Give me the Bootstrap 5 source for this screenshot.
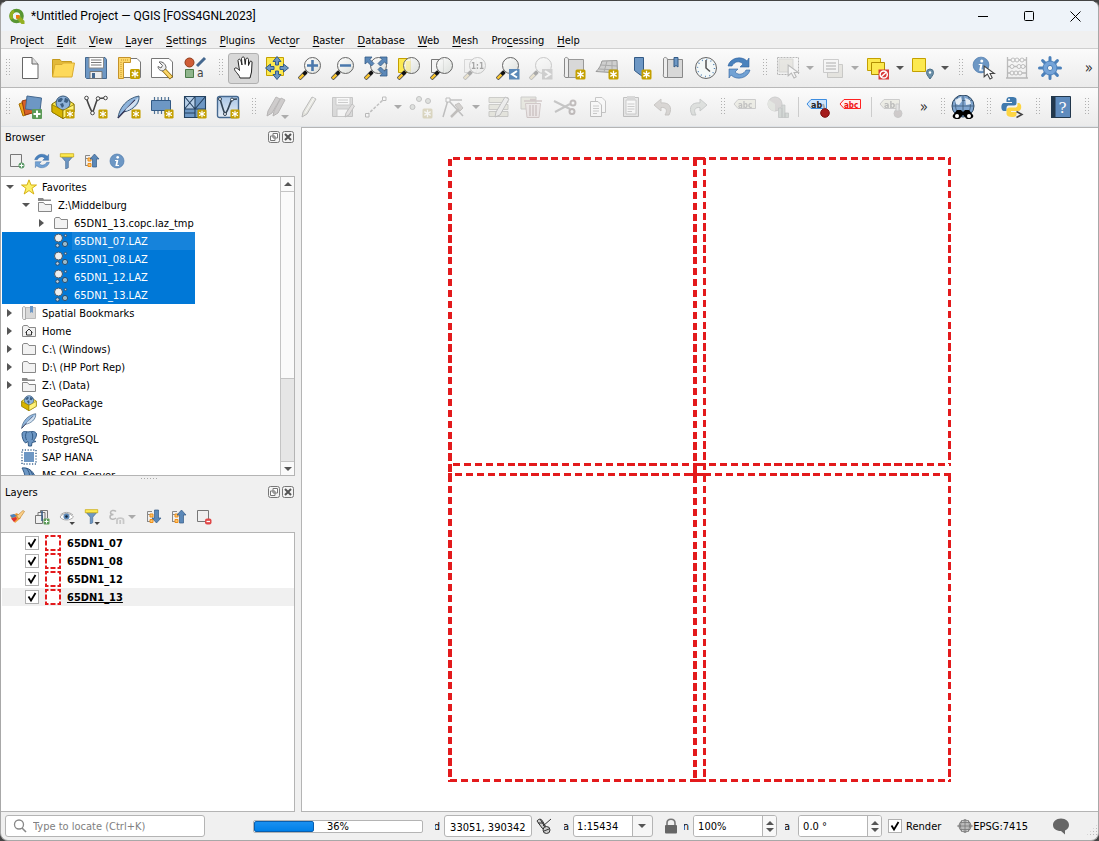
<!DOCTYPE html>
<html lang="en">
<head>
<meta charset="utf-8">
<meta name="viewport" content="width=device-width, initial-scale=1">
<title>*Untitled Project — QGIS [FOSS4GNL2023]</title>
<link href="https://cdn.jsdelivr.net/npm/bootstrap@5.3.0/dist/css/bootstrap.min.css" rel="stylesheet">
<style>
  :root { --edge:#b4b4b4; --face:#f0f0f0; }
  body { background:#444; font-family:"DejaVu Sans Condensed","Noto Sans",sans-serif; font-size:11px; line-height:18px; color:#000; }
  .app { background:var(--face); border:1px solid #a8a8a8; border-top-color:#444; border-radius:8px; overflow:hidden; }
  button { color:inherit; font:inherit; border:0; background:none; padding:0; }
  .titlebar { height:30px; background:#eef3f9; font-family:Roboto,"Noto Sans",sans-serif; font-size:12px; padding-left:8px; }
  .titlebar span { padding-left:2px; }
  .winbtn { width:46px; height:30px; }
  .menu { height:17px; padding-left:9px; gap:13px; line-height:19px; }
  .menu a { color:#000; text-decoration:none; }
  .menu u { text-underline-offset:2px; }
  .bar { height:39px; background:linear-gradient(#fbfbfb,#ebebeb); border-top:1px solid #cfcfcf; }
  .bar + .bar { border-top-color:#b8b8b8; }
  .tool { width:33px; height:31px; display:flex; align-items:center; justify-content:center; flex:none; border-radius:3px; }
  .tool svg { width:24px; height:24px; }
  .tool:disabled svg, .tool-sm:disabled svg { opacity:.32; filter:grayscale(.6); }
  .tool.active { width:31px; margin:0 1px; background:#d8d8d8; border:1px solid #b0b0b0; }
  .grip { width:16px; height:18px; flex:none; background:linear-gradient(90deg,#b0b0b0 1px,transparent 1px,transparent 3px,#b0b0b0 3px) 8px 0/4px 3px repeat-y; -webkit-mask:repeating-linear-gradient(#000 0 1px,transparent 1px 3px); mask:repeating-linear-gradient(#000 0 1px,transparent 1px 3px); }
  .grip.first { width:12px; background-position:5px 0; }
  .grip.mid { width:15px; }
  .grip.tight { width:13px; }
  .drop { width:12px; height:24px; flex:none; display:flex; align-items:center; justify-content:center; }
  .drop::before { content:""; border:4px solid transparent; border-top-color:#555; border-bottom:0; }
  .drop:disabled::before { border-top-color:#aaa; }
  .sep { width:7px; height:20px; flex:none; background:linear-gradient(#ccc,#ccc) 4px 0/1px 100% no-repeat; }
  .more { width:18px; font-size:15px; flex:none; color:#333; }
  .more.wide { width:26px; padding-left:8px; }
  .side { width:294px; flex:none; }
  .browser-pane { height:349px; flex:none; }
  .pane-title { height:19px; padding-left:4px; }
  .pane-title span, .lab, .layers-tree label { padding-top:2px; }
  .pane-title button { width:14px; height:14px; display:flex; align-items:center; justify-content:center; }
  .pane-title svg { width:12px; height:12px; }
  .pane-tools { height:31px; padding-left:7px; gap:7px; }
  .tool-sm { width:18px; height:18px; display:flex; align-items:center; justify-content:center; flex:none; }
  .tool-sm svg, .tree svg { width:16px; height:16px; flex:none; }
  .box { background:#fff; border:1px solid var(--edge); }
  .box-left { border-left:0; }
  .tree { list-style:none; margin:0; padding:1px 0 0 1px; }
  .tree li { height:18px; display:flex; align-items:center; white-space:nowrap; padding-left:3px; }
  .tree .tw { width:16px; height:10px; display:flex; align-items:center; padding-left:1px; flex:none; }
  .tw.open::before { content:""; border:4px solid transparent; border-top-color:#555; border-bottom:0; }
  .tw.shut::before { content:""; border:4px solid transparent; border-left:5px solid #555; border-right:0; margin-left:1px; }
  .tree .lab { padding-left:5px; }
  .tree .l2 { padding-left:19px; } .tree .l3 { padding-left:35px; }
  .tree .sel { background:#0078d7; color:#fff; width:193px; }
  .tree .cur { background:linear-gradient(90deg,#0078d7 70px,#1683db 70px); }
  .vscroll { width:14px; background:#e6e6e6; border-left:1px solid #c4c4c4; }
  .vscroll button { height:14px; background:#fafafa; display:flex; align-items:center; justify-content:center; }
  .vscroll .up::before { content:""; border:4px solid transparent; border-bottom-color:#555; border-top:0; }
  .vscroll .dn { border-top:1px solid #c4c4c4; }
  .thumb { height:188px; background:#fafafa; border:solid #c4c4c4; border-width:1px 0; }
  .hsplit { height:6px; flex:none; background:repeating-linear-gradient(90deg,#aaa 0 1px,transparent 1px 3px) 140px 2px/17px 1px no-repeat; }
  .layers-tree li { padding-left:23px; font-weight:700; }
  .layers-tree label { padding-left:6px; }
  .layers-tree .tick { margin-right:6px; }
  .layers-tree .now { background:#f0f0f0; }
  .tick { appearance:none; width:14px; height:14px; margin:0; border:1px solid #b0b0b0; background:#fff; flex:none; }
  .tick:checked { background:#fff url("data:image/svg+xml,%3Csvg xmlns='http://www.w3.org/2000/svg' viewBox='0 0 12 12'%3E%3Cpath d='M2.5 5.5 5 9.5 9.5 2' fill='none' stroke='%23000' stroke-width='1.8'/%3E%3C/svg%3E") center/12px no-repeat; }
  .vsplit { width:6px; flex:none; }
  .status { height:28px; flex:none; }
  .status label, .status .txt { padding-top:2px; }
  .field { height:22px; border:1px solid var(--edge); border-radius:3px; background:#fff; color:#000; padding:2px 5px 0; font:inherit; min-width:0; }
  .coords { width:88px; }
  .locate { width:200px; padding:0 4px 0 6px; gap:4px; }
  .locate input { border:0; outline:0; min-width:0; font:inherit; flex:1; padding:2px 0 0 1px; }
  .locate input::placeholder { color:#808080; opacity:1; }
  .job { width:170px; height:13px; border:1px solid var(--edge); border-radius:2px; background:#fff; }
  .job .progress-bar { background:linear-gradient(#1a90f0,#0080e8); border:1px solid #0a5fae; border-radius:2px; }
  .job .pct { font-size:11px; padding-top:2px; }
  .clip { width:5px; overflow:hidden; display:flex; justify-content:flex-end; flex:none; }
  .clip.far { margin-left:12px; }
  .lock { margin-left:10px; margin-right:5px; }
  .combo { width:80px; appearance:none; padding:2px 3px 0; background:
     url("data:image/svg+xml,%3Csvg xmlns='http://www.w3.org/2000/svg' width='20' height='20'%3E%3Cpath d='M0 0h1v20H0z' fill='%23b4b4b4'/%3E%3Cpath d='M1 0h19v20H1z' fill='%23f6f6f6'/%3E%3Cpath d='M6 8h8l-4 4z' fill='%23555'/%3E%3C/svg%3E") right 0/20px 20px no-repeat #fff; }
  .spin { width:84px; padding:0; overflow:hidden; }
  .spin input { border:0; outline:0; min-width:0; flex:1; font:inherit; padding:2px 4px 0; }
  .spin div { width:14px; border-left:1px solid var(--edge); background:#f8f8f8; gap:3px; }
  .spin .up::before, .spin .dn::before, .vscroll .dn::before { content:""; display:block; border:4px solid transparent; }
  .spin .up::before { border-bottom-color:#555; border-top:0; }
  .spin .dn::before, .vscroll .dn::before { border-top-color:#555; border-bottom:0; }
  .render { margin-left:6px; }
  .corner { width:12px; height:12px; background:radial-gradient(circle,#bbb 1px,transparent 1px) 0 0/3px 3px; clip-path:polygon(100% 0,100% 100%,0 100%); }
  .ic16 { width:16px; height:16px; flex:none; }
  .main { min-height:0; }
</style>
</head>
<body>
<svg width="0" height="0" class="position-absolute" aria-hidden="true">
  <defs>
    <linearGradient id="gLens" x2="1" y2="1"><stop offset="0" stop-color="#fff"/><stop offset="1" stop-color="#d8dcd8"/></linearGradient>
    <linearGradient id="gBlue" x2="0" y2="1"><stop offset="0" stop-color="#a9c6e6"/><stop offset="1" stop-color="#e8eff7"/></linearGradient>
    <symbol id="badge" viewBox="0 0 11 11"><rect x=".5" y=".5" width="10" height="10" rx="1.5" fill="#c4a000"/><path d="M5.500 1.800V9.200M2.300 3.600 8.700 7.400M8.700 3.600 2.300 7.400" stroke="#fff" stroke-width="1.300"/></symbol>
    <symbol id="lens" viewBox="0 0 24 24"><path d="M1 23 8 16" stroke="#555" stroke-width="4"/><path d="M1.500 22.500 5.500 18.500" stroke="#fcc62c" stroke-width="2.400"/><path d="M5.500 18.500 8.500 15.500" stroke="#111" stroke-width="3.200"/><circle cx="14.500" cy="9.500" r="8" fill="url(#gLens)" fill-opacity=".85" stroke="#666"/></symbol>
    <symbol id="folder16" viewBox="0 0 16 16"><path d="M1.500 13.500V3.500L3 2.500H6.500L8 4.500H14.500V13.500Z" fill="#f2f2f2" stroke="#888"/></symbol>
    <symbol id="folders16" viewBox="0 0 16 16"><path d="M1 4V1H6L7 2.500H14V4Z" fill="#888"/><path d="M1.500 14.500V5.500H6.500L8 7.500H14.500V14.500Z" fill="#f2f2f2" stroke="#888"/></symbol>
    <symbol id="cloud16" viewBox="0 0 16 16"><g stroke="#2c4f70"><circle cx="5.500" cy="5" r="4" fill="#eee" stroke="#456"/><circle cx="12" cy="11" r="2.600" fill="#9bc"/><circle cx="4.500" cy="12.500" r="1.800" fill="#bcd"/><circle cx="12.500" cy="2.500" r="1.200" fill="#bcd"/></g></symbol>
    <symbol id="feather" viewBox="0 0 24 24"><path d="M1 23C2 13 10 3 22 1 23 10 14 16 6 17Z" fill="#8fb5dc" stroke="#415e7b"/><path d="M1 23 18 5" stroke="#335" stroke-width="1.200"/><path d="M8 16C14 15 20 10 21.500 2.500L9 14Z" fill="#d3e1f0"/></symbol>
    <symbol id="gpkg" viewBox="0 0 24 24"><path d="M1 9 12 2 23 9V17L12 23.500 1 17Z" fill="#fce94f" stroke="#8a7500"/><circle cx="12" cy="8" r="7" fill="#8fb3da" stroke="#345577"/><path d="M6.500 5 10 2.500 12 4 10 7 7 7ZM14 2.500 18 5 16 8 13 7ZM9 9 12 8 13 11 11 13Z" fill="#3b5f84"/><path d="M1 9.500 12 15.500V23.500L1 17Z" fill="#d8b400" stroke="#8a7500" stroke-width=".8"/><path d="M12 15.500 23 9.500V17L12 23.500Z" fill="#fff37a" stroke="#8a7500" stroke-width=".8"/></symbol>
    <symbol id="refresh" viewBox="0 0 24 24"><g fill="#4a82bd" stroke="#2f62a0" stroke-width=".6"><path d="M1 10C3 2 14-1 20 5L22 2V11H13L16 8C12 4 7 6 5 10Z"/><path d="M23 14C21 22 10 25 4 19L2 22V13H11L8 16C12 20 17 18 19 14Z" fill="#72a2d4"/></g></symbol>
    <symbol id="filter" viewBox="0 0 24 24"><path d="M3 5H21L14 13V22L10 24V13Z" fill="#6d97c4" stroke="#45688f"/><path d="M2 1H22V6H2Z" fill="#fce94f" stroke="#c4a000"/></symbol>
    <symbol id="info" viewBox="0 0 24 24"><circle cx="12" cy="12" r="10.500" fill="#6d97c4" stroke="#4a78ac"/><circle cx="13" cy="6.500" r="2" fill="#fff"/><path d="M9 10.500H14L12.500 18H15V19.500H9.500L11 12H9Z" fill="#fff"/></symbol>
    <symbol id="redsq" viewBox="0 0 16 16"><rect x="1" y="1" width="14" height="14" fill="#fff" stroke="#e31a1c" stroke-width="2" stroke-dasharray="5 2" stroke-dashoffset="2.500"/></symbol>
    <symbol id="star" viewBox="0 0 16 16"><path d="M8 .8 10 6H15.500L11 9.300 12.800 15 8 11.600 3.200 15 5 9.300.5 6H6Z" fill="#fcf06a" stroke="#d1a900" stroke-width=".9"/></symbol>
    <symbol id="tree-arrow" viewBox="0 0 16 16"><path d="M6 2.500H1.500V13M1.500 5.500H5M1.500 12.500H5" stroke="#888" fill="none"/><path d="M4 5H7V8H4ZM4 10.500H7V13.500H4Z" fill="#ffc46b" stroke="#ee8f1a"/></symbol>
    <symbol id="abc" viewBox="0 0 24 24"><path d="M1 9 5 4.500H22.500V13.500H5Z"/><text x="5" y="12.500" font-family="DejaVu Sans Condensed" font-weight="700" font-size="8" stroke="none" fill="#555">abc</text></symbol>
    <symbol id="cursor" viewBox="0 0 12 14"><path d="M1 1V11L4 8.500 6.500 13 8.500 12 6.500 8H10.500Z" fill="#fff" stroke="#444"/></symbol>
    <symbol id="float" viewBox="0 0 12 12"><rect x=".5" y=".5" width="11" height="11" rx="2" fill="#f4f4f4" stroke="#777"/><path d="M5 2.500H9.500V7H5ZM2.500 5H7V9.500H2.500Z" fill="#fff" stroke="#777"/></symbol>
    <symbol id="shut" viewBox="0 0 12 12"><rect x=".5" y=".5" width="11" height="11" rx="2" fill="#f4f4f4" stroke="#777"/><path d="M3 3 9 9M9 3 3 9" stroke="#555" stroke-width="2"/></symbol>
  </defs>
</svg>

<div class="app vh-100 d-flex flex-column">
  <header class="titlebar d-flex align-items-center flex-shrink-0">
    <svg class="ic16 me-1" viewBox="0 0 16 16"><circle cx="7.500" cy="8" r="5.500" fill="none" stroke="#589632" stroke-width="3.600"/><path d="M5 3.100A5.500 5.500 0 0 0 3 11" fill="none" stroke="#93b023" stroke-width="3"/><path d="M7 7H10L15.500 13V16H12.500L7 10Z" fill="#93b023"/><path d="M7 7H10.500V10.500H7Z" fill="#ee7913"/></svg>
    <span class="me-auto">*Untitled Project — QGIS [FOSS4GNL2023]</span>
    <button class="winbtn" aria-label="Minimize"><svg width="11" height="11"><path d="M0 5.500H10" stroke="#000"/></svg></button>
    <button class="winbtn" aria-label="Maximize"><svg width="11" height="11"><rect x=".5" y=".5" width="9" height="9" rx="1" fill="none" stroke="#000"/></svg></button>
    <button class="winbtn" aria-label="Close"><svg width="11" height="11"><path d="M.5.5 10.500 10.500M10.500.5.500 10.500" stroke="#000"/></svg></button>
  </header>

  <nav class="menu d-flex flex-shrink-0" aria-label="Main menu">
    <a href="#">Pro<u>j</u>ect</a><a href="#"><u>E</u>dit</a><a href="#"><u>V</u>iew</a><a href="#"><u>L</u>ayer</a><a href="#"><u>S</u>ettings</a><a href="#"><u>P</u>lugins</a><a href="#">Vect<u>o</u>r</a><a href="#"><u>R</u>aster</a><a href="#"><u>D</u>atabase</a><a href="#"><u>W</u>eb</a><a href="#"><u>M</u>esh</a><a href="#">Pro<u>c</u>essing</a><a href="#"><u>H</u>elp</a>
  </nav>

  <div class="bar d-flex align-items-center flex-shrink-0" role="toolbar" aria-label="Project and map navigation">
    <span class="grip first"></span>
    <button class="tool" aria-label="New project"><svg viewBox="0 0 24 24"><path d="M4.500 1.500H14L20 8V22.500H4.500Z" fill="#fff" stroke="#666"/><path d="M14 1.500V8H20" fill="#ddd" stroke="#666"/></svg></button>
    <button class="tool" aria-label="Open project"><svg viewBox="0 0 24 24"><path d="M1.500 20V3.500H9L10.500 5.500H20.500V20Z" fill="#e2b93a" stroke="#c49a1e"/><path d="M1.500 21 4 8.500H11L12.500 7H23.500L21 21Z" fill="#fdd95a" stroke="#d9ab30"/></svg></button>
    <button class="tool" aria-label="Save project"><svg viewBox="0 0 24 24"><path d="M1.500 1.500H21L22.500 3.500V22.500H2.500L1.500 21.500Z" fill="#6d97c4" stroke="#45688f"/><path d="M5 1.500H19.500V12H5Z" fill="#fff" stroke="#888"/><path d="M7 4H17.500M7 6.500H17.500M7 9H17.500" stroke="#777"/><path d="M6 15.500H18V22.500H6Z" fill="#eee" stroke="#777"/><path d="M8 17H11V22H8Z" fill="#45688f"/></svg></button>
    <button class="tool" aria-label="New print layout"><svg viewBox="0 0 24 24"><path d="M3.500 2.500H20L23.500 6V21.500H3.500Z" fill="#fff" stroke="#777"/><path d="M1.500 1.500H13.500V6.500H6.500V22.500H1.500Z" fill="#fcd669" stroke="#c4922a"/><path d="M4 4H12M4 6V21" stroke="#c4922a" stroke-dasharray="1 1"/><use href="#badge" x="12.500" y="12.500" width="11" height="11"/></svg></button>
    <button class="tool" aria-label="Layout manager"><svg viewBox="0 0 24 24"><path d="M1.500 2.500H19L22.500 6V21.500H1.500Z" fill="#fff" stroke="#777"/><path d="M13 13 21.500 22" stroke="#8a6500" stroke-width="4.500"/><path d="M13 13 21 21.500" stroke="#fcd669" stroke-width="3"/><path d="M9 6 12.500 9.500 11 12 8 10.500C8 13.500 11 15.500 13.500 14.500L16 12.500C16.500 9 13 5 9 6Z" fill="#eee" stroke="#666"/></svg></button>
    <button class="tool" aria-label="Style manager"><svg viewBox="0 0 24 24"><circle cx="6.500" cy="6.500" r="4.500" fill="#cf5c36" stroke="#8f3a1a"/><path d="M14 10 22 2" stroke="#45688f" stroke-width="3"/><path d="M2.500 13.500H10.500V21.500H2.500Z" fill="#8fb58c" stroke="#4b7a49"/><text x="14" y="21" font-size="12" fill="#444" font-family="DejaVu Sans Condensed">a</text></svg></button>
    <span class="grip"></span>
    <button class="tool active" aria-label="Pan map"><svg viewBox="0 0 24 24"><path d="M8 22C7 18 2 15 2.500 12.500 4 11 6 13 7.500 14.500L6 4.500C6.500 2.500 8.500 3 9 5L10 9 9.500 2.500C10 .5 12.500.5 12.500 2.500L13.200 8.500 13.800 3C14.500 1.500 16.500 2 16.500 3.500L16.500 9.500 18 5.500C19 4.500 20.500 5.500 20 7L19.500 16 18 22Z" fill="#fff" stroke="#222"/></svg></button>
    <button class="tool" aria-label="Pan map to selection"><svg viewBox="0 0 24 24"><path d="M1.500 1.500H18.500V19.500H1.500Z" fill="#fce94f" stroke="#c4a000"/><path d="M12 .5 16 5.500H13.500V9H10.500V5.500H8ZM23.500 12 18.500 16V13.500H15V10.500H18.500V8ZM12 23.500 8 18.500H10.500V15H13.500V18.500H16ZM.5 12 5.500 8V10.500H9V13.500H5.500V16Z" fill="#6d97c4" stroke="#335a85"/></svg></button>
    <button class="tool" aria-label="Zoom in"><svg viewBox="0 0 24 24"><use href="#lens"/><path d="M14.500 4V15M9 9.500H20" stroke="#4a78ac" stroke-width="2.600"/></svg></button>
    <button class="tool" aria-label="Zoom out"><svg viewBox="0 0 24 24"><use href="#lens"/><path d="M9 9.500H20" stroke="#4a78ac" stroke-width="2.600"/></svg></button>
    <button class="tool" aria-label="Zoom full"><svg viewBox="0 0 24 24"><use href="#lens"/><path d="M1 1H8L6 3.500 10 7.500 7.500 10 3.500 6 1 8ZM23 1V8L20.500 6 16.500 10 14 7.500 18 3.500 16 1ZM23 20H16L18 17.500 14 13.500 16.500 11 20.500 15 23 13Z" fill="#5b88b8" stroke="#335a85" stroke-width=".8"/></svg></button>
    <button class="tool" aria-label="Zoom to selection"><svg viewBox="0 0 24 24"><path d="M1.500 2.500H13.500V16.500H1.500Z" fill="#fce94f" stroke="#c4a000"/><use href="#lens"/><path d="M9 5H13.500V15H9Z" fill="#fce94f" opacity=".35"/></svg></button>
    <button class="tool" aria-label="Zoom to layer"><svg viewBox="0 0 24 24"><path d="M1.500 3.500H13.500V16.500H1.500Z" fill="#f4f4f4" stroke="#777"/><use href="#lens"/></svg></button>
    <button class="tool" aria-label="Zoom to native resolution" disabled><svg viewBox="0 0 24 24"><path d="M1.500 3.500H13.500V16.500H1.500Z" fill="#eee" stroke="#999"/><use href="#lens"/><text x="8" y="13" font-size="8" font-weight="700" font-family="DejaVu Sans Condensed">1:1</text></svg></button>
    <button class="tool" aria-label="Zoom last"><svg viewBox="0 0 24 24"><use href="#lens"/><path d="M13 13H23.500V23.500H13Z" fill="#5b88b8"/><path d="M21 15 16 18.300 21 21.500" fill="none" stroke="#fff" stroke-width="2"/></svg></button>
    <button class="tool" aria-label="Zoom next" disabled><svg viewBox="0 0 24 24"><use href="#lens"/><path d="M13 13H23.500V23.500H13Z" fill="#888"/><path d="M16 15 21 18.300 16 21.500" fill="none" stroke="#fff" stroke-width="2"/></svg></button>
    <button class="tool" aria-label="New map view"><svg viewBox="0 0 24 24"><path d="M6.500 3.500H21.500V21.500H4.500Z" fill="#d8d8d8" stroke="#999"/><path d="M2.500 2.500C4 .5 6.500 1.500 6.500 4V21.500H4C2 21.500 2 19 2.500 18Z" fill="#eee" stroke="#888"/><use href="#badge" x="13" y="13" width="11" height="11"/></svg></button>
    <button class="tool" aria-label="New 3D map view"><svg viewBox="0 0 24 24"><path d="M7 5 22 4.500 22.500 17 1 15.500C4 13 6 9 7 5Z" fill="#cfcfcf" stroke="#999"/><path d="M5 9 22 10M12 5 9 16M17 5V17M4 13 22 14" stroke="#aaa" fill="none"/><use href="#badge" x="13" y="13" width="11" height="11"/></svg></button>
    <button class="tool" aria-label="New bookmark"><svg viewBox="0 0 24 24"><path d="M6.500 1.500H15.500V21L11 18 6.500 14.500Z" fill="#6d97c4" stroke="#335a85"/><use href="#badge" x="13" y="13" width="11" height="11"/></svg></button>
    <button class="tool" aria-label="Show bookmarks"><svg viewBox="0 0 24 24"><path d="M6.500 3.500H21.500V21.500H4.500Z" fill="#d8d8d8" stroke="#888"/><path d="M2.500 2.500C4 .5 6.500 1.500 6.500 4V21.500H4C2 21.500 2 19 2.500 18Z" fill="#eee" stroke="#888"/><path d="M13 1.500H17V11L15 9.500 13 11Z" fill="#6d97c4" stroke="#335a85"/></svg></button>
    <button class="tool" aria-label="Temporal controller"><svg viewBox="0 0 24 24"><circle cx="12" cy="12" r="10.500" fill="#f4f8f8" stroke="#666"/><circle cx="12" cy="12" r="8.500" fill="none" stroke="#5b88b8" stroke-width="1.400" stroke-dasharray="1 3.450"/><path d="M12 4V12L16 15.500" stroke="#555" stroke-width="1.500" fill="none"/></svg></button>
    <button class="tool" aria-label="Refresh"><svg><use href="#refresh"/></svg></button>
    <span class="grip"></span>
    <button class="tool" aria-label="Select features" disabled><svg viewBox="0 0 24 24"><path d="M1.500 1.500H22.500V18M1.500 1.500V18.500H12" fill="none" stroke="#333" stroke-dasharray="2 1"/><path d="M3 3H17V16H3Z" fill="#cfc9a8" stroke="#998"/><use href="#cursor" x="11" y="8" width="13" height="15"/></svg></button>
    <button class="drop" aria-label="Select options" disabled></button>
    <button class="tool" aria-label="Select by value" disabled><svg viewBox="0 0 24 24"><path d="M6.500 8.500H21.500V21.500H6.500Z" fill="#cfc9a8" stroke="#776"/><path d="M2.500 3.500H17.500V16.500H2.500Z" fill="#f6f6f6" stroke="#777"/><path d="M5 7H15M5 10H15M5 13H15" stroke="#666" stroke-width="1.400"/></svg></button>
    <button class="drop" aria-label="Value options" disabled></button>
    <button class="tool" aria-label="Deselect features"><svg viewBox="0 0 24 24"><path d="M1.500 2.500H14.500V14.500H1.500Z" fill="#fce94f" stroke="#c4a000"/><path d="M5.500 6.500H18.500V18.500H5.500Z" fill="#fce94f" stroke="#b08f00"/><path d="M12.500 13.500H23V23.500H12.500Z" fill="#d83a3a"/><circle cx="17.700" cy="18.500" r="3.600" fill="none" stroke="#fff" stroke-width="1.500"/><path d="M15 21 20.500 16" stroke="#fff" stroke-width="1.500"/></svg></button>
    <button class="drop" aria-label="Deselect options"></button>
    <button class="tool" aria-label="Select by location"><svg viewBox="0 0 24 24"><path d="M1.500 2.500H14.500V15.500H1.500Z" fill="#fce94f" stroke="#c4a000"/><path d="M19 23C16 19 15.500 18 15.500 16.500A3.500 3.500 0 0 1 22.500 16.500C22.500 18 22 19 19 23Z" fill="#6a8fa8" stroke="#4d6f88"/><circle cx="19" cy="16.500" r="1.200" fill="#fff"/></svg></button>
    <button class="drop" aria-label="Location options"></button>
    <span class="grip"></span>
    <button class="tool" aria-label="Identify features"><svg viewBox="0 0 24 24"><use href="#info" x="0" y="0" width="18" height="18"/><use href="#cursor" x="11" y="9" width="13" height="15"/></svg></button>
    <button class="tool" aria-label="Field calculator" disabled><svg viewBox="0 0 24 24"><path d="M2.500 1V22.500M21.500 1V22.500M2.500 4H21.500M2.500 10.500H21.500M2.500 17H21.500M1 22H23" stroke="#444" fill="none" stroke-width="1.300"/><g fill="#fff" stroke="#444"><circle cx="8" cy="4" r="2"/><circle cx="12" cy="4" r="2"/><circle cx="17" cy="4" r="2"/><circle cx="7" cy="10.500" r="2"/><circle cx="14" cy="10.500" r="2"/><circle cx="18" cy="10.500" r="2"/><circle cx="7" cy="17" r="2"/><circle cx="11" cy="17" r="2"/><circle cx="15" cy="17" r="2"/></g></svg></button>
    <button class="tool" aria-label="Processing toolbox"><svg viewBox="0 0 24 24"><path d="M12 1.500V22.500M1.500 12H22.500M4.600 4.600 19.400 19.400M19.400 4.600 4.600 19.400" stroke="#4b80ba" stroke-width="3" stroke-linecap="round"/><circle cx="12" cy="12" r="7" fill="#74a3d8" stroke="#4b80ba"/><circle cx="12" cy="12" r="2.600" fill="#f4f4f4" stroke="#4b80ba"/></svg></button>
    <button class="more ms-auto" aria-label="More tools">»</button>
  </div>

  <div class="bar d-flex align-items-center flex-shrink-0" role="toolbar" aria-label="Data, editing and labels">
    <span class="grip first"></span>
    <button class="tool" aria-label="Data source manager"><svg viewBox="0 0 24 24"><path d="M1 9 10 5 15 17 5 21Z" fill="#f0a818" stroke="#a67000"/><path d="M4 6 15 3 18 17 7 20Z" fill="#d8602a" stroke="#943a10"/><path d="M9 1 23.500 3 22 16 7.500 14Z" fill="#6d97c4" stroke="#45688f"/><rect x="14" y="14" width="10" height="10" rx="1" fill="#5c9a58"/><path d="M19 15.500V22.500M15.500 19H22.500" stroke="#fff" stroke-width="2"/></svg></button>
    <button class="tool" aria-label="New GeoPackage layer"><svg viewBox="0 0 24 24"><use href="#gpkg"/><use href="#badge" x="14" y="14" width="10" height="10"/></svg></button>
    <button class="tool" aria-label="New shapefile layer"><svg viewBox="0 0 24 24"><path d="M2.500 3.500C4 8 6 14 8.500 17.500 11 13 11 8 14 3.500L21 3" fill="none" stroke="#444" stroke-width="1.600"/><g fill="#fff" stroke="#444"><circle cx="2.500" cy="3" r="1.800"/><circle cx="14" cy="3.500" r="1.800"/><circle cx="21.500" cy="3" r="1.800"/><circle cx="8.500" cy="18" r="1.800"/></g><use href="#badge" x="14" y="14" width="10" height="10"/></svg></button>
    <button class="tool" aria-label="New SpatiaLite layer"><svg viewBox="0 0 24 24"><use href="#feather"/><use href="#badge" x="14" y="14" width="10" height="10"/></svg></button>
    <button class="tool" aria-label="New temporary layer"><svg viewBox="0 0 24 24"><path d="M4.500 2V19M8 2V19M11.500 2V19M15 2V19M18.500 2V19" stroke="#4f7295" stroke-width="1.200"/><path d="M1.500 5.500H20.500V15.500H1.500Z" fill="#6d97c4" stroke="#335a85"/><use href="#badge" x="14" y="14" width="10" height="10"/></svg></button>
    <button class="tool" aria-label="New mesh layer"><svg viewBox="0 0 24 24"><path d="M1.500 1.500H22.500V22.500H1.500Z" fill="#6d97c4"/><path d="M1.500 1.500H12V14H1.500Z" fill="#b7cfe8"/><path d="M1.500 1.500H22.500V22.500H1.500ZM1.500 14H22.500M12 1.500V22.500M1.500 1.500 12 14 22.500 1.500M1.500 14 12 1.500M1.500 18H12" stroke="#24415f" stroke-width="1.100" fill="none"/><use href="#badge" x="14" y="14" width="10" height="10"/></svg></button>
    <button class="tool" aria-label="New virtual layer"><svg viewBox="0 0 24 24"><rect x="1.500" y="1.500" width="21" height="21" rx="2" fill="url(#gBlue)" stroke="#45688f" stroke-width="1.400"/><path d="M4 4C6 10 7 15 9 19 13 15 13 9 16 4.500L21 4" fill="none" stroke="#345" stroke-width="1.600"/><g fill="#fff" stroke="#345"><circle cx="4" cy="4" r="1.500"/><circle cx="16" cy="4.500" r="1.500"/><circle cx="9" cy="19" r="1.500"/></g><use href="#badge" x="14" y="14" width="10" height="10"/></svg></button>
    <span class="grip"></span>
    <button class="tool" aria-label="Current edits" disabled><svg viewBox="0 0 24 24"><path d="M2 21 3 16 11 2 15 4 7 18ZM8 21 9 16 16 3 20 5 13 18Z" fill="#877" stroke="#433"/><path d="M16 20H24L20 24Z" fill="#222"/></svg></button>
    <button class="tool" aria-label="Toggle editing" disabled><svg viewBox="0 0 24 24"><path d="M4 22 5 17 14 2 18 4 9 19Z" fill="#cc9" stroke="#444"/><path d="M7 18 16 3" stroke="#fff"/></svg></button>
    <button class="tool" aria-label="Save layer edits" disabled><svg viewBox="0 0 24 24"><path d="M1.500 2.500H21.500V21.500H1.500Z" fill="#aaa" stroke="#666"/><path d="M5 2.500H19V10H5ZM6 14H17V21.500H6Z" fill="#fff" stroke="#777"/><path d="M7 5H17M7 7.500H17" stroke="#777"/><path d="M14 22 15 18 21 9 23.500 11 18 20Z" fill="#cbb" stroke="#555"/></svg></button>
    <button class="tool" aria-label="Add line feature" disabled><svg viewBox="0 0 24 24"><path d="M3 20 20 4" stroke="#555" stroke-width="1.500" stroke-dasharray="3 1.500"/><path d="M1.500 18.500H5V22H1.500ZM18.500 2H22V5.500H18.500Z" fill="#fff" stroke="#444"/></svg></button>
    <button class="drop" aria-label="Digitize options" disabled></button>
    <button class="tool" aria-label="Add point feature" disabled><svg viewBox="0 0 24 24"><g fill="#aba" stroke="#555"><circle cx="10" cy="4" r="2.500"/><circle cx="19" cy="6" r="2.500"/><circle cx="3.500" cy="12" r="2.500"/></g><use href="#badge" x="13" y="13" width="11" height="11"/></svg></button>
    <button class="tool" aria-label="Vertex tool" disabled><svg viewBox="0 0 24 24"><path d="M1 22 6 5H20M8 7 21 21" fill="none" stroke="#555" stroke-width="1.500"/><path d="M4 3H8V7H4Z" fill="#fff" stroke="#444"/><path d="M9 22 18 13" stroke="#654" stroke-width="2.500"/><path d="M13 10 17 8 21 13 18 16Z" fill="#987" stroke="#654"/></svg></button>
    <button class="drop" aria-label="Vertex options" disabled></button>
    <button class="tool" aria-label="Modify attributes" disabled><svg viewBox="0 0 24 24"><path d="M2 2.500H21V7.500H2ZM2 9.500H21V14.500H2ZM2 16.500H21V21.500H2Z" fill="#cc9" stroke="#776"/><path d="M8 22 9 17 18 2 22 4 13 20Z" fill="#ddd" stroke="#555"/></svg></button>
    <button class="tool" aria-label="Delete selected" disabled><svg viewBox="0 0 24 24"><path d="M1 2H16V14H1Z" fill="#cc9" stroke="#776"/><path d="M5.500 8.500H20.500L19 22.500H7Z" fill="#ecc" stroke="#a66"/><path d="M4 6H22M10 4.500H16M10 10V21M13 10V21M16 10V21" stroke="#a66" stroke-width="1.600"/></svg></button>
    <button class="tool" aria-label="Cut features" disabled><svg viewBox="0 0 24 24"><path d="M1 6 17 14M2 17 17 9" stroke="#666" stroke-width="2"/><g fill="none" stroke="#644" stroke-width="2"><circle cx="20" cy="8" r="2.500"/><circle cx="19" cy="16.500" r="2.500"/></g></svg></button>
    <button class="tool" aria-label="Copy features" disabled><svg viewBox="0 0 24 24"><path d="M9.500 2.500H16L19.500 6V17.500H9.500Z" fill="#fff" stroke="#666"/><path d="M4.500 6.500H12L15.500 10V21.500H4.500Z" fill="#fff" stroke="#555"/><path d="M7 11H13M7 13.500H13M7 16H13M7 18.500H11" stroke="#777"/></svg></button>
    <button class="tool" aria-label="Paste features" disabled><svg viewBox="0 0 24 24"><path d="M4.500 2.500H19.500V21.500H4.500Z" fill="#ccc" stroke="#555"/><path d="M7 5H17V19H7Z" fill="#fff" stroke="#777"/><path d="M8 1H16V5H8Z" fill="#999"/><path d="M8.500 9H15.500M8.500 11.500H15.500M8.500 14H15.500M8.500 16.500H13" stroke="#777"/></svg></button>
    <button class="tool" aria-label="Undo" disabled><svg viewBox="0 0 24 24"><path d="M2 10 9 4V8C17 7 21 12 17 20H13C16 15 14 12 9 12.500V16Z" fill="#a98" stroke="#765"/></svg></button>
    <button class="tool" aria-label="Redo" disabled><svg viewBox="0 0 24 24"><path d="M22 10 15 4V8C7 7 3 12 7 20H11C8 15 10 12 15 12.500V16Z" fill="#aba" stroke="#677"/></svg></button>
    <span class="grip mid"></span>
    <button class="tool" aria-label="Layer labeling" disabled><svg viewBox="0 0 24 24" fill="#dda" stroke="#777"><use href="#abc"/></svg></button>
    <button class="tool" aria-label="Layer diagrams" disabled><svg viewBox="0 0 24 24"><circle cx="9" cy="9" r="7" fill="#a99" stroke="#777"/><path d="M9 9V16A7 7 0 0 1 3 5Z" fill="#bca"/><path d="M12.500 13H16V22.500H12.500ZM16 10H19V22.500H16ZM19 18H22.500V22.500H19Z" fill="#8a9" stroke="#566" stroke-width=".7"/></svg></button>
    <span class="sep"></span>
    <button class="tool" aria-label="Pin labels"><svg viewBox="0 0 24 24"><path d="M1 9 5 4.500H20.500V13.500H5Z" fill="#cfe4fb" stroke="#3d8de0"/><text x="5" y="12.500" font-family="DejaVu Sans" font-weight="700" font-size="8" fill="#222">ab</text><path d="M17 9 19 15" stroke="#aaa" stroke-width="2"/><circle cx="19" cy="18" r="4.300" fill="#a51d1d" stroke="#7c1010"/></svg></button>
    <button class="tool" aria-label="Show unplaced labels"><svg viewBox="0 0 24 24"><path d="M1 9 5 4.500H21.500V13.500H5Z" fill="#fee" stroke="#f22"/><text x="5" y="12.500" font-family="DejaVu Sans Condensed" font-weight="700" font-size="8" fill="#e11">abc</text></svg></button>
    <span class="sep"></span>
    <button class="tool" aria-label="Move label" disabled><svg viewBox="0 0 24 24"><path d="M1 9 5 4.500H20.500V13.500H5Z" fill="#dda" stroke="#777"/><text x="5" y="12.500" font-family="DejaVu Sans" font-weight="700" font-size="8" fill="#444">ab</text><circle cx="19" cy="18.500" r="4" fill="#977" stroke="#777"/><path d="M17 9H20V16H17Z" fill="#ccc" stroke="#777"/></svg></button>
    <button class="more wide" aria-label="More label tools">»</button>
    <span class="grip tight"></span>
    <button class="tool" aria-label="MetaSearch"><svg viewBox="0 0 24 24"><circle cx="12" cy="11" r="11" fill="#7fa5cf" stroke="#2d4760"/><path d="M3 5.500H21M1 11H23M12 0V18M7 1C4 8 4 12 6 17M17 1C20 8 20 12 18 17" stroke="#3c5b7a" fill="none" stroke-width=".8"/><path d="M4 5 10 2 11 6 8 10 5 9ZM14 3 19 5 20 9 15 10Z" fill="#e4edf5"/><path d="M6 15H10L12 17 14 15H18L22 20A4 3 0 0 1 14 22L12 20 10 22A4 3 0 0 1 2 20Z" fill="#000"/><circle cx="6" cy="21" r="2" fill="#fff"/><circle cx="18" cy="21" r="2" fill="#fff"/></svg></button>
    <span class="grip"></span>
    <button class="tool" aria-label="Python console"><svg viewBox="0 0 24 24"><path d="M11 2C6 2 6.500 4 6.500 7H12V8H4C.5 8 .5 16 4 16H6.500V13C6.500 11 8 10.500 9 10.500H14C16 10.500 16.500 9 16.500 8V4.500C16.500 2.500 14 2 11 2Z" fill="#3f79ad"/><path d="M12 22C17 22 16.500 20 16.500 17H11V16H18C22.500 16 22 8 18.500 8H17.500V10C17.500 12 16 12.500 15 12.500H9.500C7.500 12.500 6.500 14 6.500 15.500V19C6.500 21 9 22 12 22Z" fill="#fdd543"/><circle cx="9" cy="4.500" r="1" fill="#fff"/><path d="M16.500 16.500 22 19.500 16.500 22.500" fill="none" stroke="#444" stroke-width="1.500"/></svg></button>
    <span class="grip"></span>
    <button class="tool" aria-label="Help contents"><svg viewBox="0 0 24 24"><path d="M2.500 1.500H21.500V22.500H2.500Z" fill="#5f8bbd" stroke="#22374c"/><path d="M2 1H6.500V23H2Z" fill="#22374c"/><text x="9.500" y="17.500" font-size="15" fill="#fff" font-family="DejaVu Serif">?</text></svg></button>
    <span class="grip"></span>
  </div>

  <main class="main d-flex flex-grow-1 border-top">
    <div class="side d-flex flex-column">
      <section class="browser-pane d-flex flex-column" aria-label="Browser">
        <div class="pane-title d-flex align-items-center"><span class="me-auto">Browser</span>
          <button aria-label="Float Browser panel"><svg><use href="#float"/></svg></button>
          <button aria-label="Close Browser panel"><svg><use href="#shut"/></svg></button></div>
        <div class="pane-tools d-flex align-items-center">
          <button class="tool-sm" aria-label="Add selected layers"><svg viewBox="0 0 16 16"><path d="M1.500 1.500H12.500V13.500H1.500Z" fill="none" stroke="#777"/><circle cx="12.500" cy="12.500" r="3" fill="#5c9a68"/><path d="M12.500 10.500V14.500M10.500 12.500H14.500" stroke="#fff"/></svg></button>
          <button class="tool-sm" aria-label="Refresh"><svg><use href="#refresh"/></svg></button>
          <button class="tool-sm" aria-label="Filter browser"><svg><use href="#filter"/></svg></button>
          <button class="tool-sm" aria-label="Collapse all"><svg viewBox="0 0 16 16"><use href="#tree-arrow"/><path d="M10.500 1 15 6H12.500V14H8.500V6H6Z" fill="#5b88b8" stroke="#335a85" stroke-width=".7"/></svg></button>
          <button class="tool-sm" aria-label="Properties"><svg><use href="#info"/></svg></button>
        </div>
        <div class="box box-left d-flex flex-grow-1 overflow-hidden">
          <ul class="tree flex-grow-1 overflow-hidden">
            <li><span class="tw open"></span><svg><use href="#star"/></svg><span class="lab">Favorites</span></li>
            <li class="l2"><span class="tw open"></span><svg><use href="#folders16"/></svg><span class="lab">Z:\Middelburg</span></li>
            <li class="l3"><span class="tw shut"></span><svg><use href="#folder16"/></svg><span class="lab">65DN1_13.copc.laz_tmp</span></li>
            <li class="l3 sel cur"><span class="tw"></span><svg><use href="#cloud16"/></svg><span class="lab">65DN1_07.LAZ</span></li>
            <li class="l3 sel"><span class="tw"></span><svg><use href="#cloud16"/></svg><span class="lab">65DN1_08.LAZ</span></li>
            <li class="l3 sel"><span class="tw"></span><svg><use href="#cloud16"/></svg><span class="lab">65DN1_12.LAZ</span></li>
            <li class="l3 sel"><span class="tw"></span><svg><use href="#cloud16"/></svg><span class="lab">65DN1_13.LAZ</span></li>
            <li><span class="tw shut"></span><svg viewBox="0 0 16 16"><path d="M4.500 2.500H14.500V13.500H3Z" fill="#d8d8d8" stroke="#bbb"/><path d="M1.500 2.500C2.500 1 4.500 1.500 4.500 3V14.500H2.500C1.500 14 1.500 13 1.500 12Z" fill="#eee" stroke="#aaa"/><path d="M9 1H12V8L10.500 7 9 8Z" fill="#6d97c4"/></svg><span class="lab">Spatial Bookmarks</span></li>
            <li><span class="tw shut"></span><svg viewBox="0 0 16 16"><use href="#folder16"/><path d="M4.500 9.500 8 6 11.500 9.500M5.500 9V12H10.500V9" fill="none" stroke="#333"/></svg><span class="lab">Home</span></li>
            <li><span class="tw shut"></span><svg><use href="#folder16"/></svg><span class="lab">C:\ (Windows)</span></li>
            <li><span class="tw shut"></span><svg><use href="#folder16"/></svg><span class="lab">D:\ (HP Port Rep)</span></li>
            <li><span class="tw shut"></span><svg><use href="#folders16"/></svg><span class="lab">Z:\ (Data)</span></li>
            <li><span class="tw"></span><svg><use href="#gpkg"/></svg><span class="lab">GeoPackage</span></li>
            <li><span class="tw"></span><svg><use href="#feather"/></svg><span class="lab">SpatiaLite</span></li>
            <li><span class="tw"></span><svg viewBox="0 0 16 16"><path d="M1 3C1 0 5 0 7 1 10 0 15 0 15.500 3 15.500 6 14 8 12.500 9.500L15 10.500 11 11.500 10.500 15H7.500L7 10.500 4.500 12C2 10 1 6 1 3Z" fill="#6d97c4" stroke="#335a85"/><path d="M5.500 1C4 4 4.500 7 5.500 9M10.500 1C12 3 12 7 11 9" stroke="#335a85" fill="none"/></svg><span class="lab">PostgreSQL</span></li>
            <li><span class="tw"></span><svg viewBox="0 0 16 16"><rect x="1" y="1" width="14" height="14" fill="none" stroke="#446a92" stroke-width="1.500" stroke-dasharray="1.200 1.600"/><path d="M3 3H13V13H3Z" fill="#6d97c4"/></svg><span class="lab">SAP HANA</span></li>
            <li><span class="tw"></span><svg viewBox="0 0 16 16"><path d="M1 1C7 0 14 4 15.500 15H11C10 10 7 14 3 14 5 9 3 5 1 1Z" fill="#6d97c4" stroke="#335a85"/><path d="M5 1C9 5 9 9 8 13M9 3C12 7 12 10 12 14" stroke="#335a85" fill="none"/></svg><span class="lab">MS SQL Server</span></li>
          </ul>
          <div class="vscroll d-flex flex-column flex-shrink-0">
            <button class="up" aria-label="Scroll up"></button><div class="thumb"></div><button class="dn mt-auto" aria-label="Scroll down"></button>
          </div>
        </div>
      </section>
      <div class="hsplit"></div>
      <section class="d-flex flex-column flex-grow-1" aria-label="Layers">
        <div class="pane-title d-flex align-items-center"><span class="me-auto">Layers</span>
          <button aria-label="Float Layers panel"><svg><use href="#float"/></svg></button>
          <button aria-label="Close Layers panel"><svg><use href="#shut"/></svg></button></div>
        <div class="pane-tools d-flex align-items-center">
          <button class="tool-sm" aria-label="Open layer styling"><svg viewBox="0 0 16 16"><path d="M1 7 8 4 12 9 6 14Z" fill="#f0a040"/><path d="M1 6 5 5 8 7 3 9Z" fill="#4a82bd"/><path d="M2 9.500 7 8 8 10 5 13Z" fill="#d33"/><path d="M7 6 10 10 11 9 15.500 2.500 14 1.500 9 6Z" fill="#fcd08a" stroke="#b77a20" stroke-width=".6"/></svg></button>
          <button class="tool-sm" aria-label="Add group"><svg viewBox="0 0 16 16"><path d="M1.500 6.500H8.500V14.500H1.500ZM4 6V3.500H11V11M6.500 3.500V1.500H13.500V9" fill="none" stroke="#777"/><path d="M8 2V12" stroke="#335a85" stroke-width="1.500"/><rect x="9.500" y="9.500" width="6" height="6" rx="1" fill="#5c9a58"/><path d="M12.500 10.500V14.500M10.500 12.500H14.500" stroke="#fff"/></svg></button>
          <button class="tool-sm" aria-label="Manage map themes"><svg viewBox="0 0 16 16"><path d="M1 8C4 3.500 11 3.500 14.500 8 11 12 4 12 1 8Z" fill="#fff" stroke="#aaa"/><path d="M1.500 6C5 2.500 10 2.500 14 6" fill="none" stroke="#aaa"/><circle cx="7.500" cy="7.500" r="3" fill="#5b88b8"/><circle cx="7.500" cy="7.500" r="1.200" fill="#123"/><path d="M10.500 13H16L13 16Z" fill="#444"/></svg></button>
          <button class="tool-sm" aria-label="Filter legend"><svg viewBox="0 0 16 16"><use href="#filter" width="15" height="15"/><path d="M10.500 13H16L13 16Z" fill="#444"/></svg></button>
          <div class="d-flex align-items-center">
            <button class="tool-sm" aria-label="Filter by expression" disabled><svg viewBox="0 0 16 16"><path d="M7 2.500C5 .5 1.500 1.500 1.500 3.500 1.500 5 3 5.500 4.500 5.500 2.500 5.500 1 6.500 1 8 1 10.500 5 11 7 9" fill="none" stroke="#444" stroke-width="1.500"/><path d="M8 15V11C8 8.500 14.500 8.500 14.500 11V15M11.200 11V15" fill="none" stroke="#777" stroke-width="1.800"/></svg></button>
            <button class="drop" aria-label="Expression options" disabled></button>
          </div>
          <button class="tool-sm" aria-label="Expand all"><svg viewBox="0 0 16 16"><use href="#tree-arrow"/><path d="M10.500 14 15 9H12.500V1H8.500V9H6Z" fill="#5b88b8" stroke="#335a85" stroke-width=".7"/></svg></button>
          <button class="tool-sm" aria-label="Collapse all"><svg viewBox="0 0 16 16"><use href="#tree-arrow"/><path d="M10.500 1 15 6H12.500V14H8.500V6H6Z" fill="#5b88b8" stroke="#335a85" stroke-width=".7"/></svg></button>
          <button class="tool-sm" aria-label="Remove layer"><svg viewBox="0 0 16 16"><path d="M1.500 1.500H12.500V12.500H1.500Z" fill="none" stroke="#777"/><rect x="9" y="9.500" width="6.500" height="6" rx="2" fill="#e04848"/><path d="M10.500 12.500H14" stroke="#fff" stroke-width="1.300"/></svg></button>
        </div>
        <div class="box box-left flex-grow-1">
          <ul class="tree layers-tree">
            <li><input class="tick" type="checkbox" id="ly07" checked><svg><use href="#redsq"/></svg><label for="ly07">65DN1_07</label></li>
            <li><input class="tick" type="checkbox" id="ly08" checked><svg><use href="#redsq"/></svg><label for="ly08">65DN1_08</label></li>
            <li><input class="tick" type="checkbox" id="ly12" checked><svg><use href="#redsq"/></svg><label for="ly12">65DN1_12</label></li>
            <li class="now"><input class="tick" type="checkbox" id="ly13" checked><svg><use href="#redsq"/></svg><label for="ly13"><span class="text-decoration-underline">65DN1_13</span></label></li>
          </ul>
        </div>
      </section>
    </div>
    <div class="vsplit"></div>
    <section class="box flex-grow-1 d-flex align-items-center justify-content-center overflow-hidden border-end-0" aria-label="Map canvas">
      <svg width="504" height="625" viewBox="448 157 504 625" class="flex-shrink-0" shape-rendering="crispEdges">
        <g fill="none" stroke="#e31a1c" stroke-width="3" stroke-dasharray="7.300 3.600">
          <path d="M453 158.500H693M709 158.500H951M453 464.500H693M709 464.500H951M455 474.500H693M715 474.500H951M450 780.500H693M709 780.500H951"/>
          <path d="M704.500 158V464M704.500 486V782M949.500 158V464M949.500 475V782"/>
          <path d="M450 159V474M450 475V782M695 159V464M695 487V782" stroke-width="4"/>
        </g>
        <path d="M693 157H705V160H693ZM693 463H705V466H693ZM688 473H711V476H688ZM693 779H706V782H693ZM448 473H452V476H448ZM693 463H697V483H693ZM703 463H706V470H703ZM703 473H706V482H703Z" fill="#e31a1c"/>
      </svg>
    </section>
  </main>

  <footer class="status d-flex align-items-center ps-1">
    <div class="field locate d-flex align-items-center"><svg class="ic16" viewBox="0 0 16 16"><circle cx="7" cy="6.500" r="4.500" fill="none" stroke="#888" stroke-width="1.300"/><path d="M10 10 14 14" stroke="#888" stroke-width="1.600"/></svg><input type="text" placeholder="Type to locate (Ctrl+K)" aria-label="Type to locate"></div>
    <div class="progress job position-relative ms-5 me-auto" role="progressbar" aria-valuenow="36" aria-valuemin="0" aria-valuemax="100" aria-label="Task progress"><div class="progress-bar" style="width:36%"></div><span class="pct position-absolute w-100 h-100 d-flex align-items-center justify-content-center">36%</span></div>
    <label class="clip" for="coord">d</label>
    <input id="coord" class="field coords ms-1" type="text" value="33051, 390342">
    <button class="ms-1" aria-label="Toggle extents"><svg class="ic16 d-block" viewBox="0 0 16 16"><g fill="#ccc" stroke="#333"><path d="M1 3C3 0 6 1 7 4L10 9C11 11 8 12 6 10Z"/><path d="M4 1 9 9M2 5H8M7 8 15 1" fill="none"/><circle cx="10.500" cy="12" r="3.500"/><path d="M8 13 13 11" fill="none"/></g></svg></button>
    <label class="clip far" for="scale">a</label>
    <select id="scale" class="field combo ms-1"><option>1:15434</option></select>
    <button class="lock" aria-label="Lock scale"><svg class="ic16 d-block" viewBox="0 0 16 16"><path d="M4 8V5C4 0 12 0 12 5V8" fill="none" stroke="#777" stroke-width="1.600"/><rect x="2" y="7" width="12" height="8.500" rx="1" fill="#666"/></svg></button>
    <label class="clip me-1" for="mag">n</label>
    <div class="field spin d-flex"><input id="mag" type="text" value="100%"><div class="d-flex flex-column align-items-center justify-content-center"><button class="up" aria-label="Increase magnification"></button><button class="dn" aria-label="Decrease magnification"></button></div></div>
    <label class="clip ms-2" for="rot">a</label>
    <div class="field spin d-flex ms-2"><input id="rot" type="text" value="0.0 °"><div class="d-flex flex-column align-items-center justify-content-center"><button class="up" aria-label="Increase rotation"></button><button class="dn" aria-label="Decrease rotation"></button></div></div>
    <input class="tick render" type="checkbox" id="render" checked><label for="render" class="ms-1">Render</label>
    <button class="d-flex align-items-center ms-3"><svg class="ic16" viewBox="0 0 16 16"><path d="M1 8 8 1 15 8 8 15Z" fill="#bbb"/><circle cx="8" cy="8" r="6" fill="none" stroke="#777"/><path d="M0 8H16M3 4.500H13M3 11.500H13M8 1V15M5 2C3 6 3 10 5 14M11 2C13 6 13 10 11 14" stroke="#777" fill="none" stroke-width=".8"/></svg><span class="txt">EPSG:7415</span></button>
    <button class="ms-4" aria-label="Messages"><svg class="d-block" width="18" height="18" viewBox="0 0 18 18"><path d="M9 1.500C4 1.500 1 4.500 1 8S4 14 9 14L13 17.500V13.500C15.500 12.500 17 10.500 17 8 17 4.500 14 1.500 9 1.500Z" fill="#666"/></svg></button>
    <span class="corner ms-3 align-self-end mb-1"></span>
  </footer>
</div>
<script src="https://cdn.jsdelivr.net/npm/bootstrap@5.3.0/dist/js/bootstrap.bundle.min.js"></script>
</body>
</html>
